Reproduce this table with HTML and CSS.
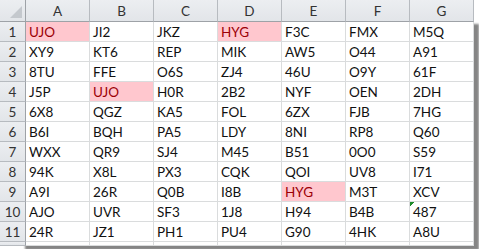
FILE: index.html
```html
<!DOCTYPE html>
<html>
<head>
<meta charset="utf-8">
<link rel="stylesheet" href="styles.css">
</head>
<body>
<div class="sheet">
  <div class="hd corner"><span class="tri"></span></div>
  <div class="hd col">A</div><div class="hd col">B</div><div class="hd col">C</div><div class="hd col">D</div><div class="hd col">E</div><div class="hd col">F</div><div class="hd col">G</div>

  <div class="hd row">1</div><div class="c bad">UJO</div><div class="c">JI2</div><div class="c">JKZ</div><div class="c bad">HYG</div><div class="c">F3C</div><div class="c">FMX</div><div class="c">M5Q</div>
  <div class="hd row">2</div><div class="c">XY9</div><div class="c">KT6</div><div class="c">REP</div><div class="c">MIK</div><div class="c">AW5</div><div class="c">O44</div><div class="c">A91</div>
  <div class="hd row">3</div><div class="c">8TU</div><div class="c">FFE</div><div class="c">O6S</div><div class="c">ZJ4</div><div class="c">46U</div><div class="c">O9Y</div><div class="c">61F</div>
  <div class="hd row">4</div><div class="c">J5P</div><div class="c bad">UJO</div><div class="c">H0R</div><div class="c">2B2</div><div class="c">NYF</div><div class="c">OEN</div><div class="c">2DH</div>
  <div class="hd row">5</div><div class="c">6X8</div><div class="c">QGZ</div><div class="c">KA5</div><div class="c">FOL</div><div class="c">6ZX</div><div class="c">FJB</div><div class="c">7HG</div>
  <div class="hd row">6</div><div class="c">B6I</div><div class="c">BQH</div><div class="c">PA5</div><div class="c">LDY</div><div class="c">8NI</div><div class="c">RP8</div><div class="c">Q60</div>
  <div class="hd row">7</div><div class="c">WXX</div><div class="c">QR9</div><div class="c">SJ4</div><div class="c">M45</div><div class="c">B51</div><div class="c">0O0</div><div class="c">S59</div>
  <div class="hd row">8</div><div class="c">94K</div><div class="c">X8L</div><div class="c">PX3</div><div class="c">CQK</div><div class="c">QOI</div><div class="c">UV8</div><div class="c">I71</div>
  <div class="hd row">9</div><div class="c">A9I</div><div class="c">26R</div><div class="c">Q0B</div><div class="c">I8B</div><div class="c bad">HYG</div><div class="c">M3T</div><div class="c">XCV</div>
  <div class="hd row">10</div><div class="c">AJO</div><div class="c">UVR</div><div class="c">SF3</div><div class="c">1J8</div><div class="c">H94</div><div class="c">B4B</div><div class="c txtnum">487</div>
  <div class="hd row">11</div><div class="c">24R</div><div class="c">JZ1</div><div class="c">PH1</div><div class="c">PU4</div><div class="c">G90</div><div class="c">4HK</div><div class="c">A8U</div>
  <div class="hd row"></div><div class="c"></div><div class="c"></div><div class="c"></div><div class="c"></div><div class="c"></div><div class="c"></div><div class="c"></div>
</div>
</body>
</html>
```

FILE: styles.css
```css
html, body {
  margin: 0;
  padding: 0;
  background: #ffffff;
}

body {
  width: 479px;
  height: 249px;
  overflow: hidden;
  font-family: Lato, "Open Sans", "Liberation Sans", sans-serif;
}

.sheet {
  display: grid;
  grid-template-columns: 26px repeat(7, 64px);
  grid-template-rows: 22px repeat(11, 20px) 4px;
  width: 474px;
  height: 246px;
  overflow: hidden;
  background: #ffffff;
  box-shadow: 15px 14px 2px -10px #858585;
}

.hd {
  box-sizing: border-box;
  background: linear-gradient(#eceef1, #e2e5e9);
  color: #333333;
  font-size: 13.5px;
  display: flex;
  align-items: center;
  justify-content: center;
}

.col {
  border-right: 1px solid #b7bbc0;
  border-bottom: 1px solid #9ea2a7;
  padding-top: 1px;
}

.row {
  border-right: 1px solid #9ea2a7;
  border-bottom: 1px solid #b7bbc0;
  padding-top: 1px;
}

.corner {
  border-right: 1px solid #9ea2a7;
  border-bottom: 1px solid #9ea2a7;
  align-items: flex-end;
  justify-content: flex-end;
  padding: 0 3px 3px 0;
}

.tri {
  width: 12px;
  height: 12px;
  background: #c4c8cd;
  clip-path: polygon(100% 0, 100% 100%, 0 100%);
}

.c {
  box-sizing: border-box;
  border-right: 1px solid #dadcdd;
  border-bottom: 1px solid #dadcdd;
  padding: 2px 0 0 3px;
  font-size: 13.5px;
  line-height: 17px;
  color: #111111;
  white-space: nowrap;
  overflow: hidden;
}

.bad {
  background: #ffc7ce;
  color: #9c0006;
}

.txtnum {
  background: linear-gradient(135deg, #1d8a2a 3.5px, transparent 3.5px);
}
```
